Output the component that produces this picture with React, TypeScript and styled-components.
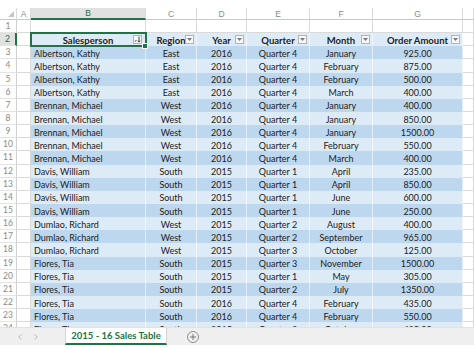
import React from 'react'
import styled, { createGlobalStyle } from 'styled-components'

const GlobalStyle = createGlobalStyle`
  html, body { margin: 0; padding: 0; background: #fff; }
  body { font-family: Lato, "Liberation Sans", sans-serif; }
`

const COLS = '17px 14px 115px 51px 50px 63px 63px 90px 1fr'
const ROW_H = 13.15
const GREEN = '#217346'

const headers = ['Salesperson', 'Region', 'Year', 'Quarter', 'Month', 'Order Amount']

const rows: string[][] = [
  ['Albertson, Kathy', 'East', '2016', 'Quarter 4', 'January', '925.00'],
  ['Albertson, Kathy', 'East', '2016', 'Quarter 4', 'February', '875.00'],
  ['Albertson, Kathy', 'East', '2016', 'Quarter 4', 'February', '500.00'],
  ['Albertson, Kathy', 'East', '2016', 'Quarter 4', 'March', '400.00'],
  ['Brennan, Michael', 'West', '2016', 'Quarter 4', 'January', '400.00'],
  ['Brennan, Michael', 'West', '2016', 'Quarter 4', 'January', '850.00'],
  ['Brennan, Michael', 'West', '2016', 'Quarter 4', 'January', '1500.00'],
  ['Brennan, Michael', 'West', '2016', 'Quarter 4', 'February', '550.00'],
  ['Brennan, Michael', 'West', '2016', 'Quarter 4', 'March', '400.00'],
  ['Davis, William', 'South', '2015', 'Quarter 1', 'April', '235.00'],
  ['Davis, William', 'South', '2015', 'Quarter 1', 'April', '850.00'],
  ['Davis, William', 'South', '2015', 'Quarter 1', 'June', '600.00'],
  ['Davis, William', 'South', '2015', 'Quarter 1', 'June', '250.00'],
  ['Dumlao, Richard', 'West', '2015', 'Quarter 2', 'August', '400.00'],
  ['Dumlao, Richard', 'West', '2015', 'Quarter 2', 'September', '965.00'],
  ['Dumlao, Richard', 'West', '2015', 'Quarter 3', 'October', '125.00'],
  ['Flores, Tia', 'South', '2015', 'Quarter 3', 'November', '1500.00'],
  ['Flores, Tia', 'South', '2015', 'Quarter 1', 'May', '305.00'],
  ['Flores, Tia', 'South', '2015', 'Quarter 2', 'July', '1350.00'],
  ['Flores, Tia', 'South', '2016', 'Quarter 4', 'February', '435.00'],
  ['Flores, Tia', 'South', '2016', 'Quarter 4', 'February', '550.00'],
  ['Flores, Tia', 'South', '2015', 'Quarter 3', 'October', '435.00'],
]

const Page = styled.div`
  width: 474px;
  height: 348px;
  overflow: hidden;
  background: #fff;
  display: flex;
  flex-direction: column;
`

const Sheet = styled.div`
  flex: none;
  height: 327px;
  padding-top: 8px;
  box-sizing: border-box;
  overflow: hidden;
`

const Row = styled.div<{ $h: number }>`
  display: grid;
  grid-template-columns: ${COLS};
  height: ${p => p.$h}px;
`

const Corner = styled.div`
  display: flex;
  align-items: flex-end;
  justify-content: flex-end;
  padding: 0 2px 2px 0;
  box-sizing: border-box;
  border-right: 1px solid #dadada;
  border-bottom: 1px solid #c8c8c8;
`

const ColLetter = styled.div<{ $active?: boolean }>`
  display: flex;
  align-items: center;
  justify-content: center;
  box-sizing: border-box;
  font-family: "Liberation Sans", sans-serif;
  font-size: 8.5px;
  color: ${p => (p.$active ? GREEN : '#8a8a8a')};
  background: ${p => (p.$active ? '#e1e1e1' : '#fff')};
  border-right: 1px solid #dadada;
  border-bottom: ${p => (p.$active ? `2px solid ${GREEN}` : '1px solid #c8c8c8')};
`

const RowNum = styled.div<{ $active?: boolean }>`
  display: flex;
  align-items: center;
  justify-content: center;
  box-sizing: border-box;
  font-size: 8.5px;
  color: ${p => (p.$active ? GREEN : '#8a8a8a')};
  background: ${p => (p.$active ? '#e1e1e1' : '#fff')};
  border-right: ${p => (p.$active ? `2px solid ${GREEN}` : '1px solid #d0d0d0')};
  border-bottom: 1px solid #e4e4e4;
`

const Blank = styled.div`
  box-sizing: border-box;
  border-right: 1px solid #dadada;
  border-bottom: 1px solid #dadada;
`

const bandColor = { head: '#ddebf7', dark: '#bdd7ee', light: '#ddebf7' }

const Cell = styled.div<{ $band: 'head' | 'dark' | 'light'; $left?: boolean }>`
  position: relative;
  display: flex;
  align-items: center;
  justify-content: ${p => (p.$left ? 'flex-start' : 'center')};
  padding: 1px 0 0 ${p => (p.$left ? '3px' : '0')};
  box-sizing: border-box;
  background: ${p => bandColor[p.$band]};
  border-right: 1px solid rgba(255, 255, 255, 0.55);
  font-size: ${p => (p.$band === 'head' ? '9.5px' : '9px')};
  font-weight: ${p => (p.$band === 'head' ? 700 : 400)};
  color: #222;
  white-space: nowrap;
  overflow: hidden;
`

const Selected = styled(Cell)`
  overflow: visible;
  outline: 2px solid ${GREEN};
  outline-offset: -1px;
  z-index: 2;

  &::after {
    content: '';
    position: absolute;
    right: -3px;
    bottom: -3px;
    width: 4px;
    height: 4px;
    background: ${GREEN};
    border: 1px solid #fff;
  }
`

const FilterBtn = styled.span<{ $inset?: number }>`
  position: absolute;
  right: ${p => p.$inset ?? 2}px;
  top: 2px;
  width: 9px;
  height: 9px;
  box-sizing: border-box;
  border: 1px solid #b4b4b4;
  background: #f7f7f7;
  display: flex;
  align-items: center;
  justify-content: center;
`

const TabBar = styled.div`
  flex: none;
  height: 18px;
  display: flex;
  align-items: stretch;
  background: #efefef;
  border-top: 1px solid #e2e2e2;
  box-sizing: border-box;
`

const Nav = styled.div`
  width: 65px;
  display: flex;
  align-items: center;
  gap: 12px;
  padding-left: 18px;
  box-sizing: border-box;
`

const Tab = styled.div`
  width: 102px;
  display: flex;
  align-items: center;
  justify-content: center;
  background: #fff;
  color: ${GREEN};
  font-size: 9.5px;
  font-weight: 700;
  border-left: 1px solid #d4d4d4;
  border-right: 1px solid #d4d4d4;
  border-bottom: 2px solid ${GREEN};
  box-sizing: border-box;
  white-space: pre;
`

const AddSheet = styled.div`
  margin-left: 20px;
  align-self: center;
  width: 12px;
  height: 12px;
  border: 1px solid #8f8f8f;
  border-radius: 50%;
  box-sizing: border-box;
  display: flex;
  align-items: center;
  justify-content: center;
`

const Triangle = () => (
  <svg width="5" height="3" viewBox="0 0 5 3">
    <path d="M0 0H5L2.5 3Z" fill="#7a7a7a" />
  </svg>
)

const SortIcon = () => (
  <svg width="7" height="7" viewBox="0 0 7 7">
    <path d="M0.5 4.5H3L1.75 6Z" fill="#555" />
    <path d="M5 0.5V6" stroke="#444" strokeWidth="1" />
    <path d="M3.8 4.6L5 6.2L6.2 4.6" stroke="#444" strokeWidth="0.9" fill="none" />
  </svg>
)

const Chevron = ({ dir }: { dir: 'l' | 'r' }) => (
  <svg width="4" height="6" viewBox="0 0 4 6">
    <path d={dir === 'l' ? 'M3.5 0.5L0.8 3L3.5 5.5' : 'M0.5 0.5L3.2 3L0.5 5.5'} stroke="#b8b8b8" strokeWidth="1" fill="none" />
  </svg>
)

const App = () => {
  const letters = ['A', 'B', 'C', 'D', 'E', 'F', 'G', '']
  return (
    <Page>
      <GlobalStyle />
      <Sheet>
        <Row $h={12}>
          <Corner>
            <svg width="6" height="6" viewBox="0 0 6 6">
              <path d="M6 0V6H0Z" fill="#c4c4c4" />
            </svg>
          </Corner>
          {letters.map((l, i) => (
            <ColLetter key={i} $active={l === 'B'}>{l}</ColLetter>
          ))}
        </Row>

        <Row $h={ROW_H}>
          <RowNum>1</RowNum>
          {letters.map((_, i) => <Blank key={i} />)}
        </Row>

        <Row $h={ROW_H}>
          <RowNum $active>2</RowNum>
          <Blank />
          {headers.map((h, i) =>
            i === 0 ? (
              <Selected key={h} $band="head">
                {h}
                <FilterBtn $inset={3}><SortIcon /></FilterBtn>
              </Selected>
            ) : (
              <Cell key={h} $band="head">
                {h}
                <FilterBtn><Triangle /></FilterBtn>
              </Cell>
            )
          )}
          <Blank />
        </Row>

        {rows.map((r, ri) => (
          <Row key={ri} $h={ROW_H}>
            <RowNum>{ri + 3}</RowNum>
            <Blank />
            {r.map((v, ci) => (
              <Cell key={ci} $band={ri % 2 === 0 ? 'dark' : 'light'} $left={ci === 0}>
                {v}
              </Cell>
            ))}
            <Blank />
          </Row>
        ))}
      </Sheet>

      <TabBar>
        <Nav>
          <Chevron dir="l" />
          <Chevron dir="r" />
        </Nav>
        <Tab>2015 - 16 Sales Table</Tab>
        <AddSheet>
          <svg width="6" height="6" viewBox="0 0 6 6">
            <path d="M3 0V6M0 3H6" stroke="#777" strokeWidth="1" />
          </svg>
        </AddSheet>
      </TabBar>
    </Page>
  )
}

export default App
